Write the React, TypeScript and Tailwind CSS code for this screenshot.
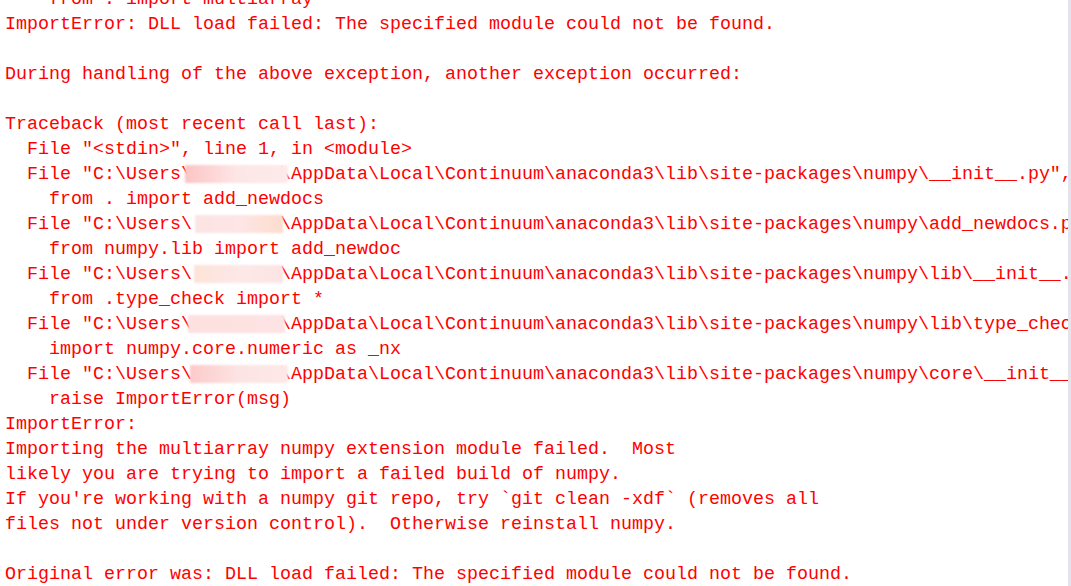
import React from "react";

type Blur = { left: number; width: number; cls: string };

const U = "        ";

const lines: { text: string; blur?: Blur }[] = [
  { text: "    from . import multiarray" },
  { text: "ImportError: DLL load failed: The specified module could not be found." },
  { text: "" },
  { text: "During handling of the above exception, another exception occurred:" },
  { text: "" },
  { text: "Traceback (most recent call last):" },
  { text: '  File "<stdin>", line 1, in <module>' },
  {
    text: '  File "C:\\Users\\' + U + '\\AppData\\Local\\Continuum\\anaconda3\\lib\\site-packages\\numpy\\__init__.py", line 142, in <module>',
    blur: { left: 185, width: 103, cls: "bg-gradient-to-r from-[#fcc4c4] via-[#fde6e6] to-[#fdeaea]" },
  },
  { text: "    from . import add_newdocs" },
  {
    text: '  File "C:\\Users\\' + U + '\\AppData\\Local\\Continuum\\anaconda3\\lib\\site-packages\\numpy\\add_newdocs.py", line 13, in <module>',
    blur: { left: 195, width: 88, cls: "bg-gradient-to-r from-[#fde4e4] via-[#fde6e6] to-[#fddccc]" },
  },
  { text: "    from numpy.lib import add_newdoc" },
  {
    text: '  File "C:\\Users\\' + U + '\\AppData\\Local\\Continuum\\anaconda3\\lib\\site-packages\\numpy\\lib\\__init__.py", line 8, in <module>',
    blur: { left: 194, width: 89, cls: "bg-gradient-to-r from-[#fde4d8] via-[#fde8e8] to-[#fde4e4]" },
  },
  { text: "    from .type_check import *" },
  {
    text: '  File "C:\\Users\\' + U + '\\AppData\\Local\\Continuum\\anaconda3\\lib\\site-packages\\numpy\\lib\\type_check.py", line 11, in <module>',
    blur: { left: 188, width: 97, cls: "bg-gradient-to-r from-[#fde0e0] via-[#fde2e2] to-[#fde4e4]" },
  },
  { text: "    import numpy.core.numeric as _nx" },
  {
    text: '  File "C:\\Users\\' + U + '\\AppData\\Local\\Continuum\\anaconda3\\lib\\site-packages\\numpy\\core\\__init__.py", line 26, in <module>',
    blur: { left: 190, width: 98, cls: "bg-gradient-to-r from-[#fccaca] via-[#fde4e4] to-[#fde8e8]" },
  },
  { text: "    raise ImportError(msg)" },
  { text: "ImportError:" },
  { text: "Importing the multiarray numpy extension module failed.  Most" },
  { text: "likely you are trying to import a failed build of numpy." },
  { text: "If you're working with a numpy git repo, try `git clean -xdf` (removes all" },
  { text: "files not under version control).  Otherwise reinstall numpy." },
  { text: "" },
  { text: "Original error was: DLL load failed: The specified module could not be found." },
];

export default function App() {
  return (
    <div className="flex h-[586px] w-[1071px] overflow-hidden bg-white">
      <div className="min-w-0 flex-1 overflow-hidden">
        <div
          className="mt-[-13px] pl-[5px] text-[18.33px] leading-[25px] text-[#ff0000]"
          style={{ fontFamily: '"Liberation Mono", "DejaVu Sans Mono", monospace' }}
        >
          {lines.map((l, i) => (
            <div key={i} className="relative h-[25px] whitespace-pre">
              {l.text || "\u00a0"}
              {l.blur && (
                <span
                  className={`absolute top-[3px] h-[18px] blur-[1px] ${l.blur.cls}`}
                  style={{ left: l.blur.left - 5, width: l.blur.width }}
                />
              )}
            </div>
          ))}
        </div>
      </div>
      <div className="w-[3px] shrink-0 bg-[#e4e4ec]" />
    </div>
  );
}
